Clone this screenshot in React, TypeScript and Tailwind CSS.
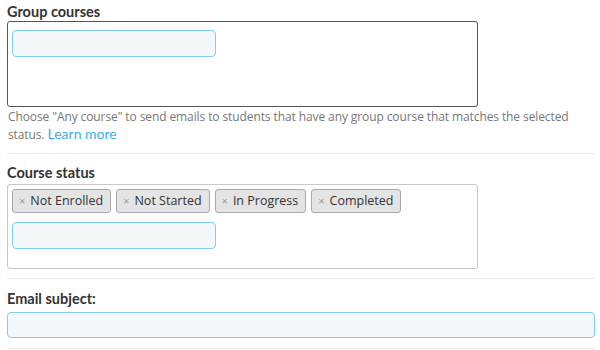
import React from 'react'

const tags = ['Not Enrolled', 'Not Started', 'In Progress', 'Completed']

function Heading({ children }: { children: React.ReactNode }) {
  return (
    <div className="font-['Lato',sans-serif] text-[14.5px] font-bold leading-[18px] text-[#333]">{children}</div>
  )
}

function SearchInput({ wide }: { wide?: boolean }) {
  return (
    <div
      className={`rounded-[4px] border border-[#80cdf0] bg-[#f5f8fb] ${wide ? 'h-[26px] w-full' : 'h-[27px] w-[204px]'}`}
    />
  )
}

export default function App() {
  return (
    <div className="h-[350px] w-[600px] overflow-hidden bg-white pl-[7px] pr-[5px] font-['Open_Sans',sans-serif]">
      {/* Group courses */}
      <div className="pt-[3px]">
        <Heading>Group courses</Heading>
        <div className="h-[86px] w-[471px] rounded-[3px] border border-[#555] px-[4px] pt-[8px]">
          <SearchInput />
        </div>
        <p className="mt-[1px] pl-px text-[12px] leading-[18px] tracking-[-0.1px] text-[#777]">
          Choose "Any course" to send emails to students that have any group course that matches the selected status.{' '}
          <a className="inline-block font-['Lato',sans-serif] text-[14px] leading-[14px] tracking-normal text-[#3ab0e2]">
            Learn more
          </a>
        </p>
      </div>

      <div className="mt-[9px] h-px bg-[#ececec]" />

      {/* Course status */}
      <div className="pt-[10px]">
        <Heading>Course status</Heading>
        <div className="mt-[2px] h-[85px] w-[471px] rounded-[3px] border border-[#c8c8c8] px-[4px] pt-[4px]">
          <div className="flex gap-[5px]">
            {tags.map((t) => (
              <span
                key={t}
                className="flex h-[24px] items-center gap-[5px] rounded-[3px] border border-[#aaa] bg-[#e4e4e4] pl-[6px] pr-[7px] text-[12.5px] text-[#333]"
              >
                <span className="text-[11px] text-[#999]">×</span>
                {t}
              </span>
            ))}
          </div>
          <div className="mt-[9px]">
            <SearchInput />
          </div>
        </div>
      </div>

      <div className="mt-[9px] h-px bg-[#ececec]" />

      {/* Email subject */}
      <div className="pt-[11px]">
        <Heading>Email subject:</Heading>
        <div className="mt-[4px]">
          <SearchInput wide />
        </div>
      </div>

      <div className="mt-[10px] h-px bg-[#ececec]" />
    </div>
  )
}
